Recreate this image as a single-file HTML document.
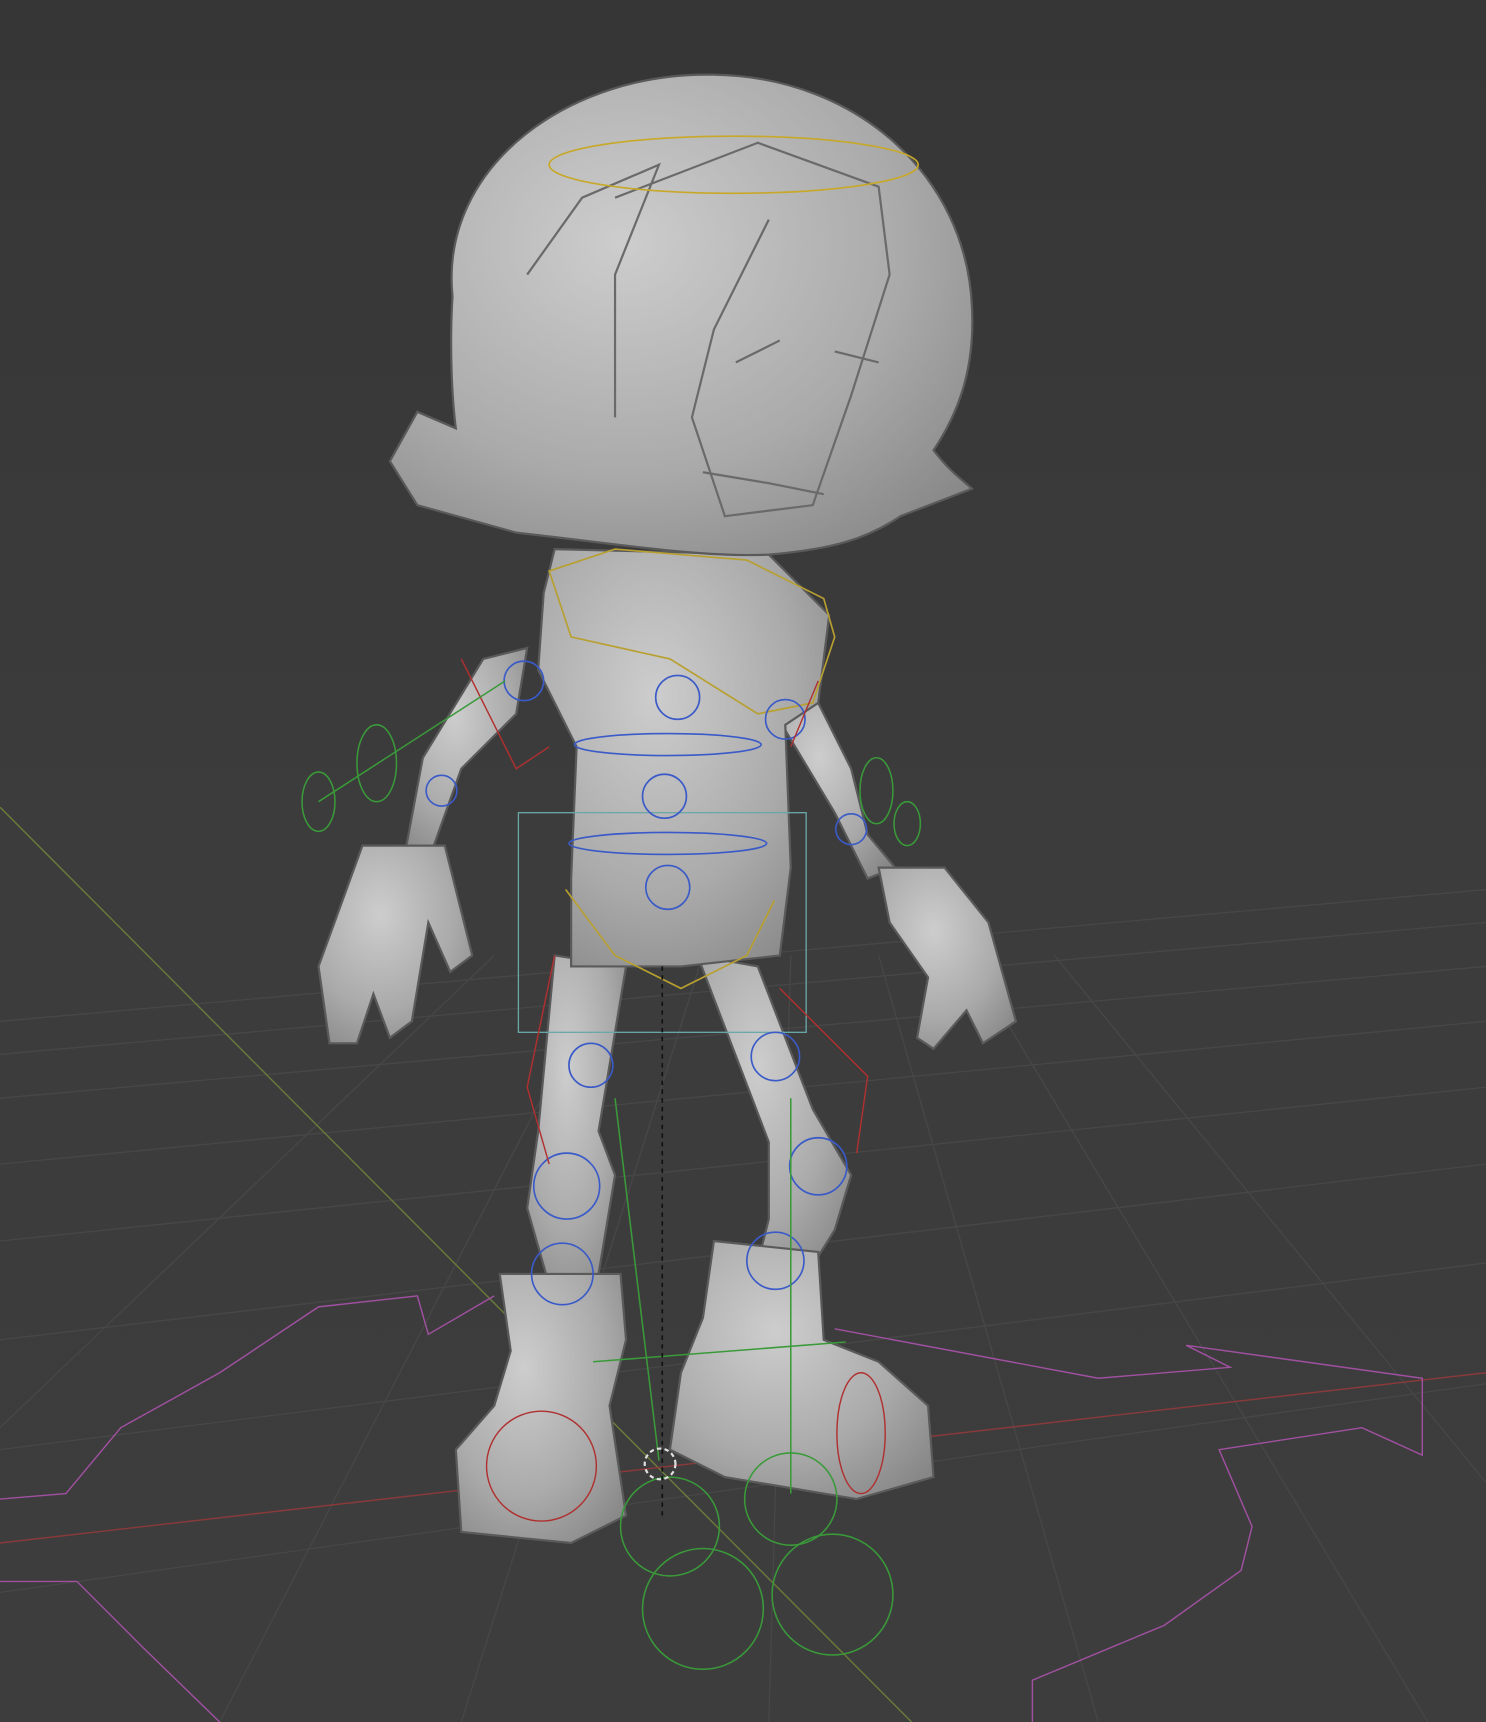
<!DOCTYPE html>
<html><head><meta charset="utf-8"><style>
html,body{margin:0;padding:0;background:#3b3b3b;}
svg{display:block}
</style></head><body>
<svg width="1486" height="1722" viewBox="0 0 1353 1568" preserveAspectRatio="none" xmlns="http://www.w3.org/2000/svg">
<defs>
<linearGradient id="bg" x1="0" y1="0" x2="0" y2="1">
<stop offset="0" stop-color="#363636"/><stop offset="0.5" stop-color="#3c3c3c"/><stop offset="1" stop-color="#3d3d3d"/></linearGradient>
<radialGradient id="sk" cx="0.4" cy="0.35" r="0.8">
<stop offset="0" stop-color="#cdcdcd"/><stop offset="0.6" stop-color="#aaaaaa"/><stop offset="1" stop-color="#868686"/></radialGradient>
</defs>
<rect width="1353" height="1568" fill="url(#bg)"/>
<g stroke="#474747" stroke-width="1.2" fill="none">
<path d="M0 1000 L1353 880 M0 1060 L1353 930 M0 1130 L1353 990 M0 1220 L1353 1060 M0 1320 L1353 1150 M0 1450 L1353 1260 M0 960 L1353 840 M0 930 L1353 810"/>
<path d="M200 1568 L560 870 M420 1568 L640 870 M700 1568 L720 870 M1000 1568 L800 870 M1300 1568 L880 870 M0 1300 L450 870 M1353 1350 L960 870"/>
</g>
<path d="M0 735 L830 1568" stroke="#6a7a3a" stroke-width="1.3"/>
<path d="M0 1405 L1353 1250" stroke="#8a3a3a" stroke-width="1.3"/>
<g stroke="#a050a0" stroke-width="1.3" fill="none">
<path d="M0 1365 L60 1360 L110 1300 L200 1250 L290 1190 L380 1180 L390 1215 L450 1180"/>
<path d="M0 1440 L70 1440 L130 1500 L200 1568"/>
<path d="M760 1210 L1000 1255 L1120 1245 L1080 1225 L1295 1255 L1295 1325 L1240 1300 L1110 1320 L1140 1390 L1130 1430 L1060 1480 L940 1530 L940 1568"/>
</g>
<g fill="url(#sk)" stroke="#5a5a5a" stroke-width="2">
<path d="M440 600 L480 590 L470 650 L420 700 L395 770 L370 770 L385 690 Z"/>
<path d="M330 770 L405 770 L430 870 L410 885 L390 840 L375 930 L355 945 L340 905 L325 950 L300 950 L290 880 Z"/>
<path d="M700 640 L740 630 L775 700 L790 760 L815 790 L790 800 L760 740 Z"/>
<path d="M800 790 L860 790 L900 840 L925 930 L895 950 L880 920 L850 955 L835 945 L845 890 L810 840 Z"/>
<path d="M505 870 L570 880 L545 1030 L560 1070 L545 1160 L500 1170 L480 1100 L490 1030 Z"/>
<path d="M635 870 L690 880 L740 1010 L775 1070 L760 1120 L735 1160 L690 1150 L700 1110 L700 1040 Z"/>
<path d="M455 1160 L565 1160 L570 1220 L555 1280 L570 1380 L520 1405 L420 1395 L415 1320 L450 1280 L465 1230 Z"/>
<path d="M650 1130 L745 1140 L750 1220 L800 1240 L845 1280 L850 1345 L780 1365 L660 1345 L610 1320 L620 1250 L640 1200 Z"/>
<path d="M505 500 L700 505 L755 560 L745 640 L715 660 L720 790 L710 870 L620 880 L520 880 L520 800 L525 680 L490 610 L495 540 Z"/>
<path d="M412 270 C400 150 520 65 650 68 C780 70 880 160 885 280 C888 340 870 380 850 410 C865 430 880 440 885 445 L820 470 C790 490 760 500 700 505 C640 508 560 495 470 485 L380 460 L355 420 L380 375 L415 390 C410 350 410 300 412 270 Z"/>
</g>
<g fill="none" stroke="#6a6a6a" stroke-width="2">
<path d="M560 180 L690 130 L800 170 L810 250 L775 360 L740 460 L660 470 L630 380 L650 300 L700 200"/>
<path d="M480 250 L530 180 L600 150 L560 250 L560 380"/>
<path d="M670 330 L710 310 M760 320 L800 330 M640 430 L700 440 L750 450"/>
</g>
<ellipse cx="668" cy="150" rx="168" ry="26" fill="none" stroke="#c8a828" stroke-width="1.5"/>
<g fill="none" stroke="#b8a030" stroke-width="1.5">
<path d="M500 520 L560 500 L680 510 L750 545 L760 580 L740 640 L690 650 L610 600 L520 580 Z"/>
<path d="M515 810 L560 870 L620 900 L680 870 L705 820"/>
</g>
<rect x="472" y="740" width="262" height="200" fill="none" stroke="#6aa8a8" stroke-width="1.2"/>
<g fill="none" stroke="#3a5ac8" stroke-width="1.5">
<circle cx="605" cy="725" r="20"/><circle cx="608" cy="808" r="20"/><circle cx="617" cy="635" r="20"/>
<ellipse cx="608" cy="678" rx="85" ry="10"/><ellipse cx="608" cy="768" rx="90" ry="10"/>
<circle cx="477" cy="620" r="18"/><circle cx="402" cy="720" r="14"/><circle cx="715" cy="655" r="18"/><circle cx="775" cy="755" r="14"/>
<circle cx="538" cy="970" r="20"/><circle cx="706" cy="962" r="22"/><circle cx="516" cy="1080" r="30"/><circle cx="745" cy="1062" r="26"/>
<circle cx="512" cy="1160" r="28"/><circle cx="706" cy="1148" r="26"/>
</g>
<g fill="none" stroke="#b03030" stroke-width="1.3">
<circle cx="493" cy="1335" r="50"/><ellipse cx="784" cy="1305" rx="22" ry="55"/>
<path d="M505 870 L480 990 L500 1060 M710 900 L790 980 L780 1050 M420 600 L470 700 L500 680 M745 620 L720 680"/>
</g>
<g fill="none" stroke="#3a9a3a" stroke-width="1.4">
<ellipse cx="343" cy="695" rx="18" ry="35"/><ellipse cx="290" cy="730" rx="15" ry="27"/>
<path d="M290 730 L460 620"/>
<ellipse cx="798" cy="720" rx="15" ry="30"/><ellipse cx="826" cy="750" rx="12" ry="20"/>
<circle cx="610" cy="1390" r="45"/><circle cx="720" cy="1365" r="42"/><circle cx="640" cy="1465" r="55"/><circle cx="758" cy="1452" r="55"/>
<path d="M560 1000 L600 1330 M720 1000 L720 1360 M540 1240 L770 1222"/>
</g>
<circle cx="601" cy="1333" r="14" fill="none" stroke="#e0e0e0" stroke-width="2" stroke-dasharray="4 3"/>
<path d="M603 880 L603 1380" stroke="#111" stroke-width="1.5" stroke-dasharray="4 4"/>
</svg>
</body></html>
